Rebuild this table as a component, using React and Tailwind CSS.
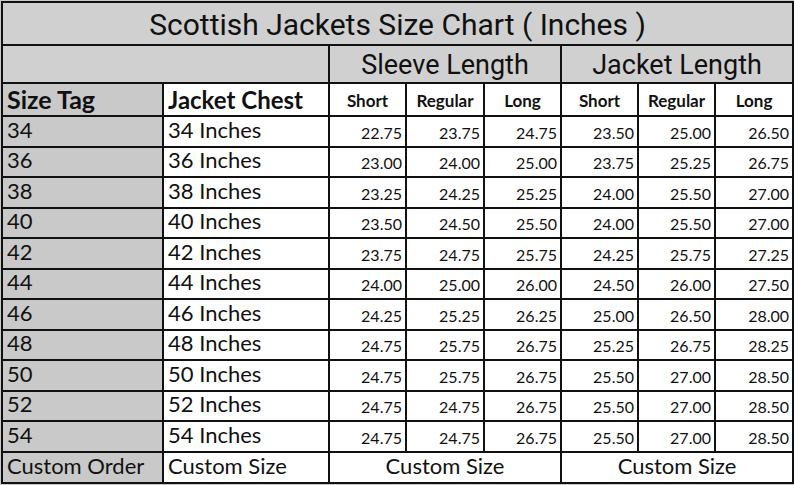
const rows = [
  ['34', '34 Inches', '22.75', '23.75', '24.75', '23.50', '25.00', '26.50'],
  ['36', '36 Inches', '23.00', '24.00', '25.00', '23.75', '25.25', '26.75'],
  ['38', '38 Inches', '23.25', '24.25', '25.25', '24.00', '25.50', '27.00'],
  ['40', '40 Inches', '23.50', '24.50', '25.50', '24.00', '25.50', '27.00'],
  ['42', '42 Inches', '23.75', '24.75', '25.75', '24.25', '25.75', '27.25'],
  ['44', '44 Inches', '24.00', '25.00', '26.00', '24.50', '26.00', '27.50'],
  ['46', '46 Inches', '24.25', '25.25', '26.25', '25.00', '26.50', '28.00'],
  ['48', '48 Inches', '24.75', '25.75', '26.75', '25.25', '26.75', '28.25'],
  ['50', '50 Inches', '24.75', '25.75', '26.75', '25.50', '27.00', '28.50'],
  ['52', '52 Inches', '24.75', '24.75', '26.75', '25.50', '27.00', '28.50'],
  ['54', '54 Inches', '24.75', '24.75', '26.75', '25.50', '27.00', '28.50'],
]

const cell = 'border-2 border-[#111]'

function App() {
  return (
    <div className="w-[794px] h-[485px] bg-[#c9c9c9] overflow-hidden text-[#111]" style={{ fontFamily: 'Lato, "Open Sans", sans-serif' }}>
      <table className="table-fixed border-collapse w-[791px] ml-[1px] mt-[1px]">
        <colgroup>
          <col className="w-[161px]" />
          <col className="w-[166px]" />
          <col className="w-[77px]" />
          <col className="w-[78px]" />
          <col className="w-[77px]" />
          <col className="w-[77px]" />
          <col className="w-[77px]" />
          <col className="w-[78px]" />
        </colgroup>
        <tbody>
          {/* Title */}
          <tr className="h-[43px] bg-[#d0d0d0]">
            <td colSpan={8} className={`${cell} text-center text-[30px] leading-none pt-[3px]`} style={{ fontFamily: 'Roboto, sans-serif' }}>
              Scottish Jackets Size Chart ( Inches )
            </td>
          </tr>

          {/* Group headers */}
          <tr className="h-[38px] bg-[#d0d0d0]">
            <td colSpan={2} className={cell}></td>
            <td colSpan={3} className={`${cell} text-center text-[27px] leading-none pt-[2px]`} style={{ fontFamily: 'Roboto, sans-serif' }}>
              Sleeve Length
            </td>
            <td colSpan={3} className={`${cell} text-center text-[27px] leading-none pt-[2px]`} style={{ fontFamily: 'Roboto, sans-serif' }}>
              Jacket Length
            </td>
          </tr>

          {/* Column headers */}
          <tr className="h-[33px]">
            <td className={`${cell} bg-[#c9c9c9] text-[25px] font-bold leading-none pl-[4px]`}>Size Tag</td>
            <td className={`${cell} bg-white text-[24px] font-bold leading-none pl-[4px]`}>Jacket Chest</td>
            {['Short', 'Regular', 'Long', 'Short', 'Regular', 'Long'].map((h, i) => (
              <td key={i} className={`${cell} bg-white text-center text-[17px] font-bold leading-none pt-[1px]`}>{h}</td>
            ))}
          </tr>

          {/* Data */}
          {rows.map((r) => (
            <tr key={r[0]} className="h-[30.5px]">
              <td className={`${cell} bg-[#c9c9c9] text-[22px] leading-none pl-[4px] align-bottom pb-[5px]`}>{r[0]}</td>
              <td className={`${cell} bg-white text-[22px] leading-none pl-[4px] align-bottom pb-[5px]`}>{r[1]}</td>
              {r.slice(2).map((v, i) => (
                <td key={i} className={`${cell} bg-white text-right text-[16px] leading-none pr-[3px] align-bottom pb-[5px]`}>{v}</td>
              ))}
            </tr>
          ))}

          {/* Custom row */}
          <tr className="h-[31px]">
            <td className={`${cell} bg-[#c9c9c9] text-[22px] leading-none pl-[4px] align-bottom pb-[5px]`}>Custom Order</td>
            <td className={`${cell} bg-white text-[22px] leading-none pl-[4px] align-bottom pb-[5px]`}>Custom Size</td>
            <td colSpan={3} className={`${cell} bg-white text-center text-[22px] leading-none align-bottom pb-[5px]`}>Custom Size</td>
            <td colSpan={3} className={`${cell} bg-white text-center text-[22px] leading-none align-bottom pb-[5px]`}>Custom Size</td>
          </tr>
        </tbody>
      </table>
    </div>
  )
}

export default App
